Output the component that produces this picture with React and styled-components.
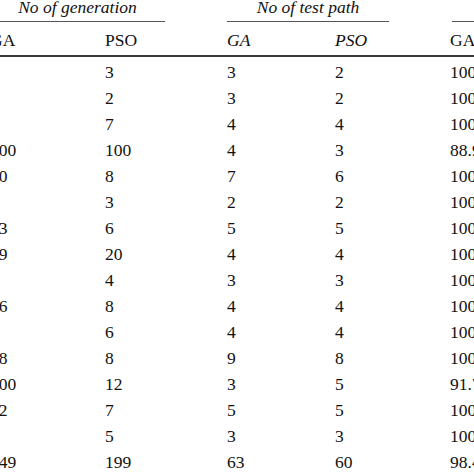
import React from "react";
import styled, { createGlobalStyle } from "styled-components";

const GlobalStyle = createGlobalStyle`
  html, body {
    margin: 0;
    padding: 0;
    background: #ffffff;
    overflow: hidden;
  }
`;

const Page = styled.div`
  width: 474px;
  height: 474px;
  overflow: hidden;
  background: #ffffff;
`;

const Table = styled.table`
  margin-left: -10px;
  border-collapse: separate;
  border-spacing: 0;
  table-layout: fixed;
  width: 580px;
  font-family: "Liberation Serif", "Times New Roman", serif;
  font-size: 17.5px;
  color: #111111;
`;

const GroupCell = styled.th`
  padding: 0;
  text-align: left;
  font-weight: normal;
  vertical-align: bottom;
`;

const GroupRule = styled.div`
  width: ${(p) => p.$width}px;
  margin-left: ${(p) => p.$offset || 0}px;
  padding-bottom: 7px;
  border-bottom: 1px solid #555555;
  line-height: 14px;
  font-style: italic;
  text-align: center;
  white-space: nowrap;
`;

const HeadCell = styled.th`
  padding: 5px 0 1.5px 0;
  line-height: 26px;
  text-align: left;
  font-weight: normal;
  font-style: ${(p) => (p.$italic ? "italic" : "normal")};
  border-bottom: 2px solid #3a3a3a;
  white-space: nowrap;
`;

const Row = styled.tr`
  &:first-child td {
    padding-top: 2.6px;
  }
`;

const Cell = styled.td`
  padding: 0;
  line-height: 26px;
  text-align: left;
  white-space: nowrap;
`;

const widths = [115, 122, 108, 115, 120];

const rows = [
  ["4", "3", "3", "2", "100"],
  ["3", "2", "3", "2", "100"],
  ["9", "7", "4", "4", "100"],
  ["100", "100", "4", "3", "88.9"],
  ["10", "8", "7", "6", "100"],
  ["5", "3", "2", "2", "100"],
  ["13", "6", "5", "5", "100"],
  ["19", "20", "4", "4", "100"],
  ["4", "4", "3", "3", "100"],
  ["16", "8", "4", "4", "100"],
  ["7", "6", "4", "4", "100"],
  ["18", "8", "9", "8", "100"],
  ["100", "12", "3", "5", "91.7"],
  ["12", "7", "5", "5", "100"],
  ["5", "5", "3", "3", "100"],
  ["149", "199", "63", "60", "98.4"],
];

const heads = [
  { label: "GA" },
  { label: "PSO" },
  { label: "GA", italic: true },
  { label: "PSO", italic: true },
  { label: "GA" },
];

export default function App() {
  return (
    <Page>
      <GlobalStyle />
      <Table>
        <colgroup>
          {widths.map((w, i) => (
            <col key={i} style={{ width: w }} />
          ))}
        </colgroup>
        <thead>
          <tr>
            <GroupCell colSpan={2}>
              <GroupRule $width={175}>No of generation</GroupRule>
            </GroupCell>
            <GroupCell colSpan={2}>
              <GroupRule $width={162}>No of test path</GroupRule>
            </GroupCell>
            <GroupCell>
              <GroupRule $width={170} $offset={2}>Coverage (%)</GroupRule>
            </GroupCell>
          </tr>
          <tr>
            {heads.map((h, i) => (
              <HeadCell key={i} $italic={h.italic}>
                {h.label}
              </HeadCell>
            ))}
          </tr>
        </thead>
        <tbody>
          {rows.map((r, i) => (
            <Row key={i}>
              {r.map((v, j) => (
                <Cell key={j}>{v}</Cell>
              ))}
            </Row>
          ))}
        </tbody>
      </Table>
    </Page>
  );
}
